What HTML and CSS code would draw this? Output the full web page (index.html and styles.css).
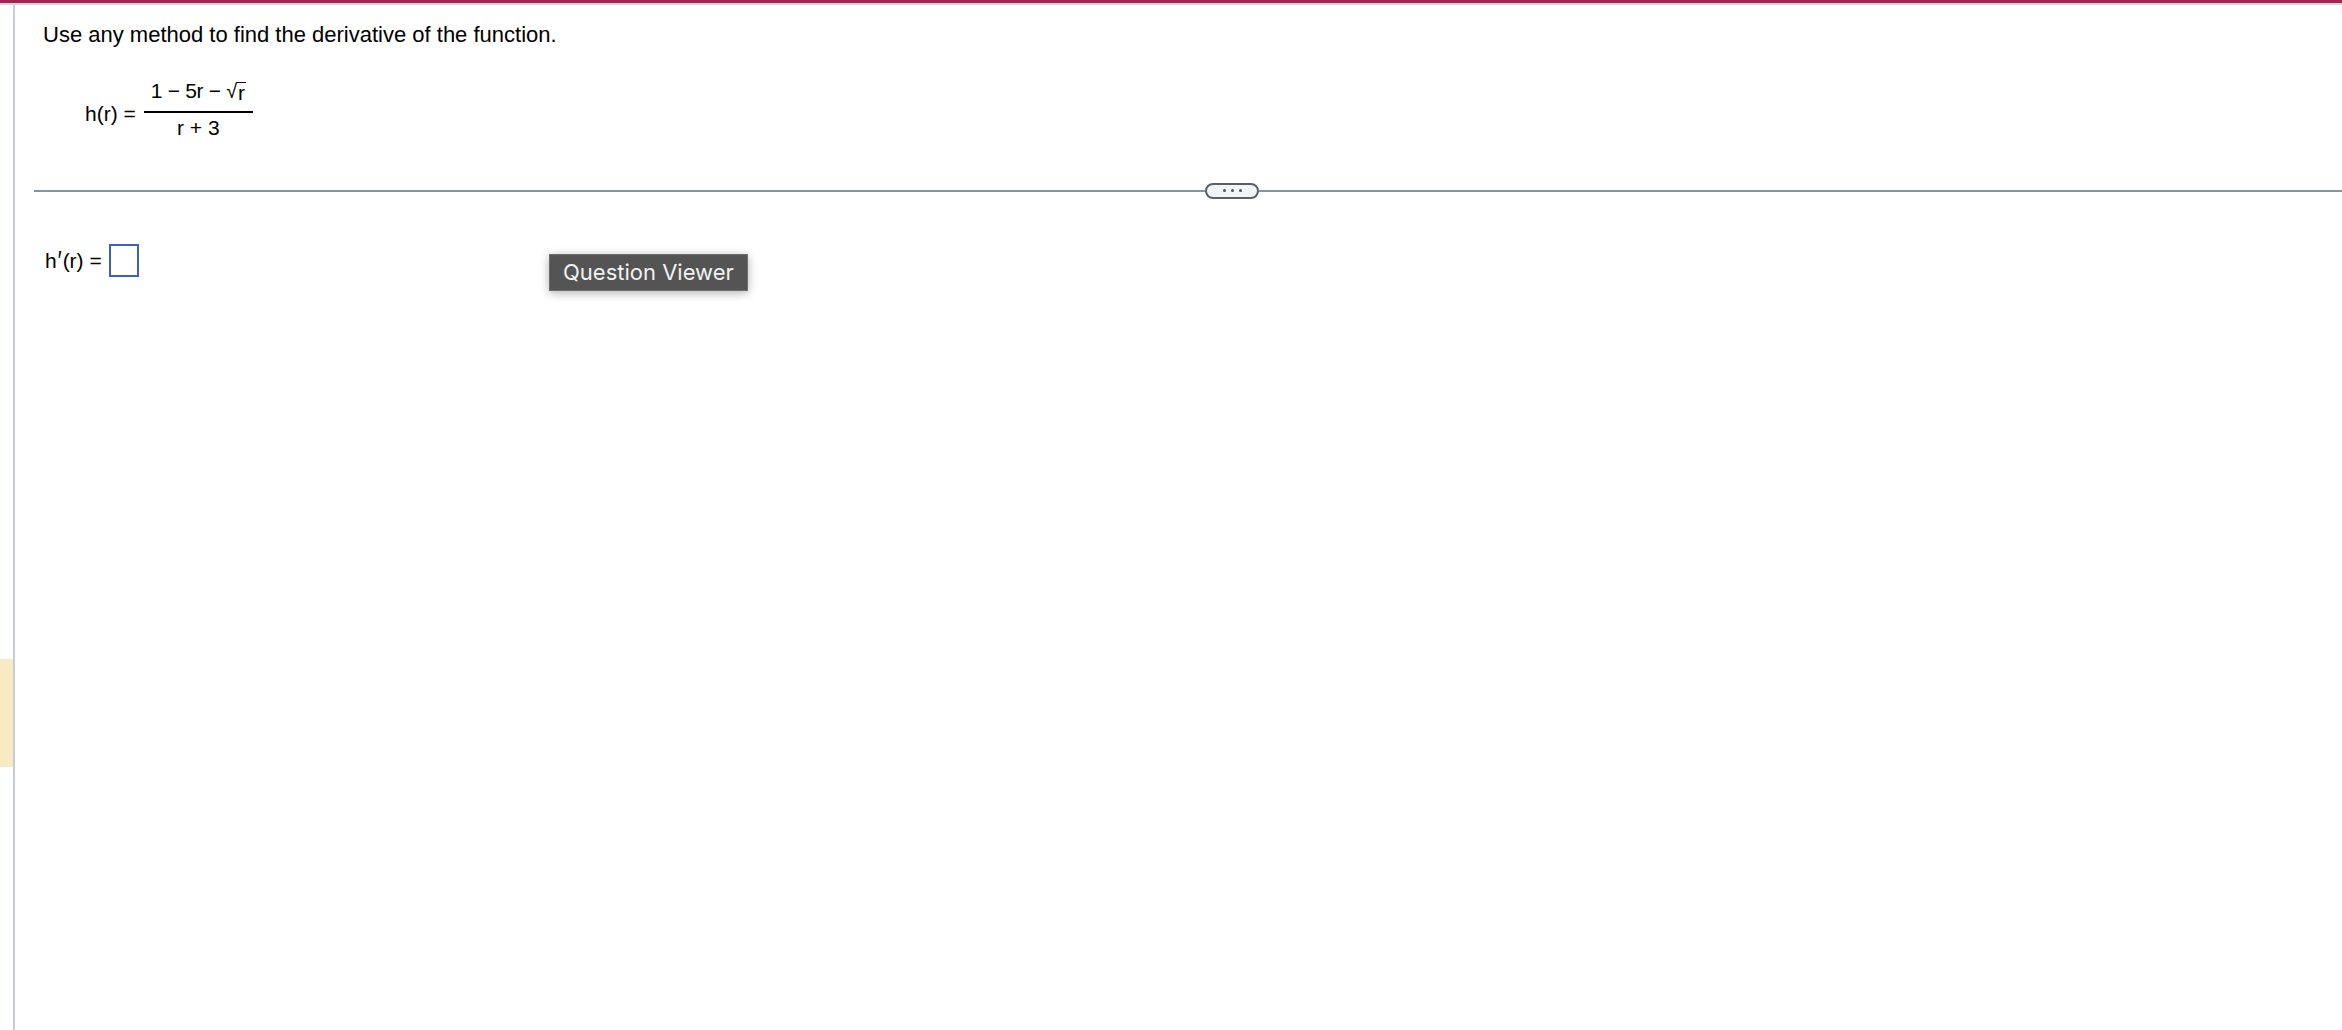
FILE: index.html
```html
<!DOCTYPE html>
<html lang="en">
<head>
<meta charset="utf-8">
<title>Question</title>
<link rel="stylesheet" href="styles.css">
</head>
<body>
<div class="topbar"></div>
<div class="subbar"></div>
<div class="main">
  <div class="rail">
    <div class="rail-spacer"></div>
    <div class="rail-mark"></div>
  </div>
  <div class="content">
    <p class="question">Use any method to find the derivative of the function.</p>
    <div class="formula">
      <span class="lhs">h(r) =</span>
      <span class="frac">
        <span class="num">1 − 5r − <span class="sqrt"><span class="radic">√</span><span class="radicand">r</span></span></span>
        <span class="den">r + 3</span>
      </span>
    </div>
    <div class="divider">
      <div class="rule rule-left"></div>
      <div class="pill"><span class="dot"></span><span class="dot"></span><span class="dot"></span></div>
      <div class="rule rule-right"></div>
    </div>
    <div class="answer">
      <span class="lhs">h<span class="prime">′</span>(r) =</span>
      <span class="box"></span>
      <div class="tooltip">Question Viewer</div>
    </div>
  </div>
</div>
</body>
</html>
```
FILE: styles.css
```css
html, body {
  margin: 0;
  padding: 0;
  background: #ffffff;
}
body {
  font-family: "Liberation Sans", Arial, sans-serif;
  color: #000000;
  overflow: hidden;
}
.topbar {
  height: 3px;
  background: #a6234f;
}
.subbar {
  height: 2px;
  background: #cdd6e4;
}
.main {
  display: flex;
  height: 1025px;
}
.rail {
  width: 13px;
  flex: none;
  display: flex;
  flex-direction: column;
  border-right: 2px solid #c6ccdc;
}
.rail-spacer {
  height: 654px;
}
.rail-mark {
  height: 108px;
  background: #f8ebc2;
}
.content {
  flex: 1;
  display: flex;
  flex-direction: column;
  min-width: 0;
}
.question {
  margin: 17px 0 0 28px;
  font-size: 22px;
  line-height: 25px;
}
.formula {
  display: flex;
  align-items: flex-start;
  margin: 33px 0 0 70px;
  font-size: 21px;
  line-height: 22px;
}
.formula .lhs {
  margin-top: 23px;
  margin-right: 8px;
  white-space: pre;
}
.frac {
  display: flex;
  flex-direction: column;
  align-items: center;
  width: 109px;
}
.num {
  display: block;
  width: 100%;
  text-align: center;
  padding-bottom: 9px;
  border-bottom: 2px solid #000000;
  white-space: pre;
  letter-spacing: -0.3px;
}
.sqrt {
  display: inline-flex;
  align-items: flex-start;
}
.radic {
  font-size: 20px;
}
.radicand {
  border-top: 1.5px solid #000000;
  line-height: 19px;
  padding: 0 1px;
  margin-top: 2px;
}
.den {
  display: block;
  margin-top: 4px;
  white-space: pre;
}
.divider {
  display: flex;
  align-items: center;
  margin: 44px 0 0 19px;
  height: 15px;
}
.rule {
  height: 2px;
  background: #8a929f;
}
.rule-left {
  width: 1171px;
  flex: none;
}
.rule-right {
  flex: 1;
}
.pill {
  flex: none;
  box-sizing: border-box;
  width: 54px;
  height: 16px;
  border: 2px solid #59606c;
  border-radius: 8px;
  background: #f3f4f6;
  display: flex;
  align-items: center;
  justify-content: center;
  gap: 5px;
}
.dot {
  width: 3px;
  height: 3px;
  border-radius: 50%;
  background: #4b5260;
}
.answer {
  position: relative;
  display: flex;
  align-items: center;
  margin: 46px 0 0 28px;
  font-size: 21px;
  line-height: 22px;
}
.answer .lhs {
  margin-left: 2px;
  margin-right: 7px;
  white-space: pre;
}
.prime {
  display: inline-block;
  margin: 0 1px;
  transform: scaleY(1.3);
}
.box {
  box-sizing: border-box;
  width: 30px;
  height: 33px;
  border: 2px solid #3c60c8;
  background: #ffffff;
}
.tooltip {
  position: absolute;
  left: 506px;
  top: 10px;
  box-sizing: border-box;
  width: 199px;
  height: 37px;
  padding-left: 13px;
  background: #545454;
  border: 1px solid #6e6e6e;
  box-shadow: 0 2px 9px rgba(0, 0, 0, 0.3);
  color: #f2f2f2;
  font-family: Inter, "Liberation Sans", sans-serif;
  font-size: 22px;
  line-height: 35px;
  white-space: nowrap;
}
```
